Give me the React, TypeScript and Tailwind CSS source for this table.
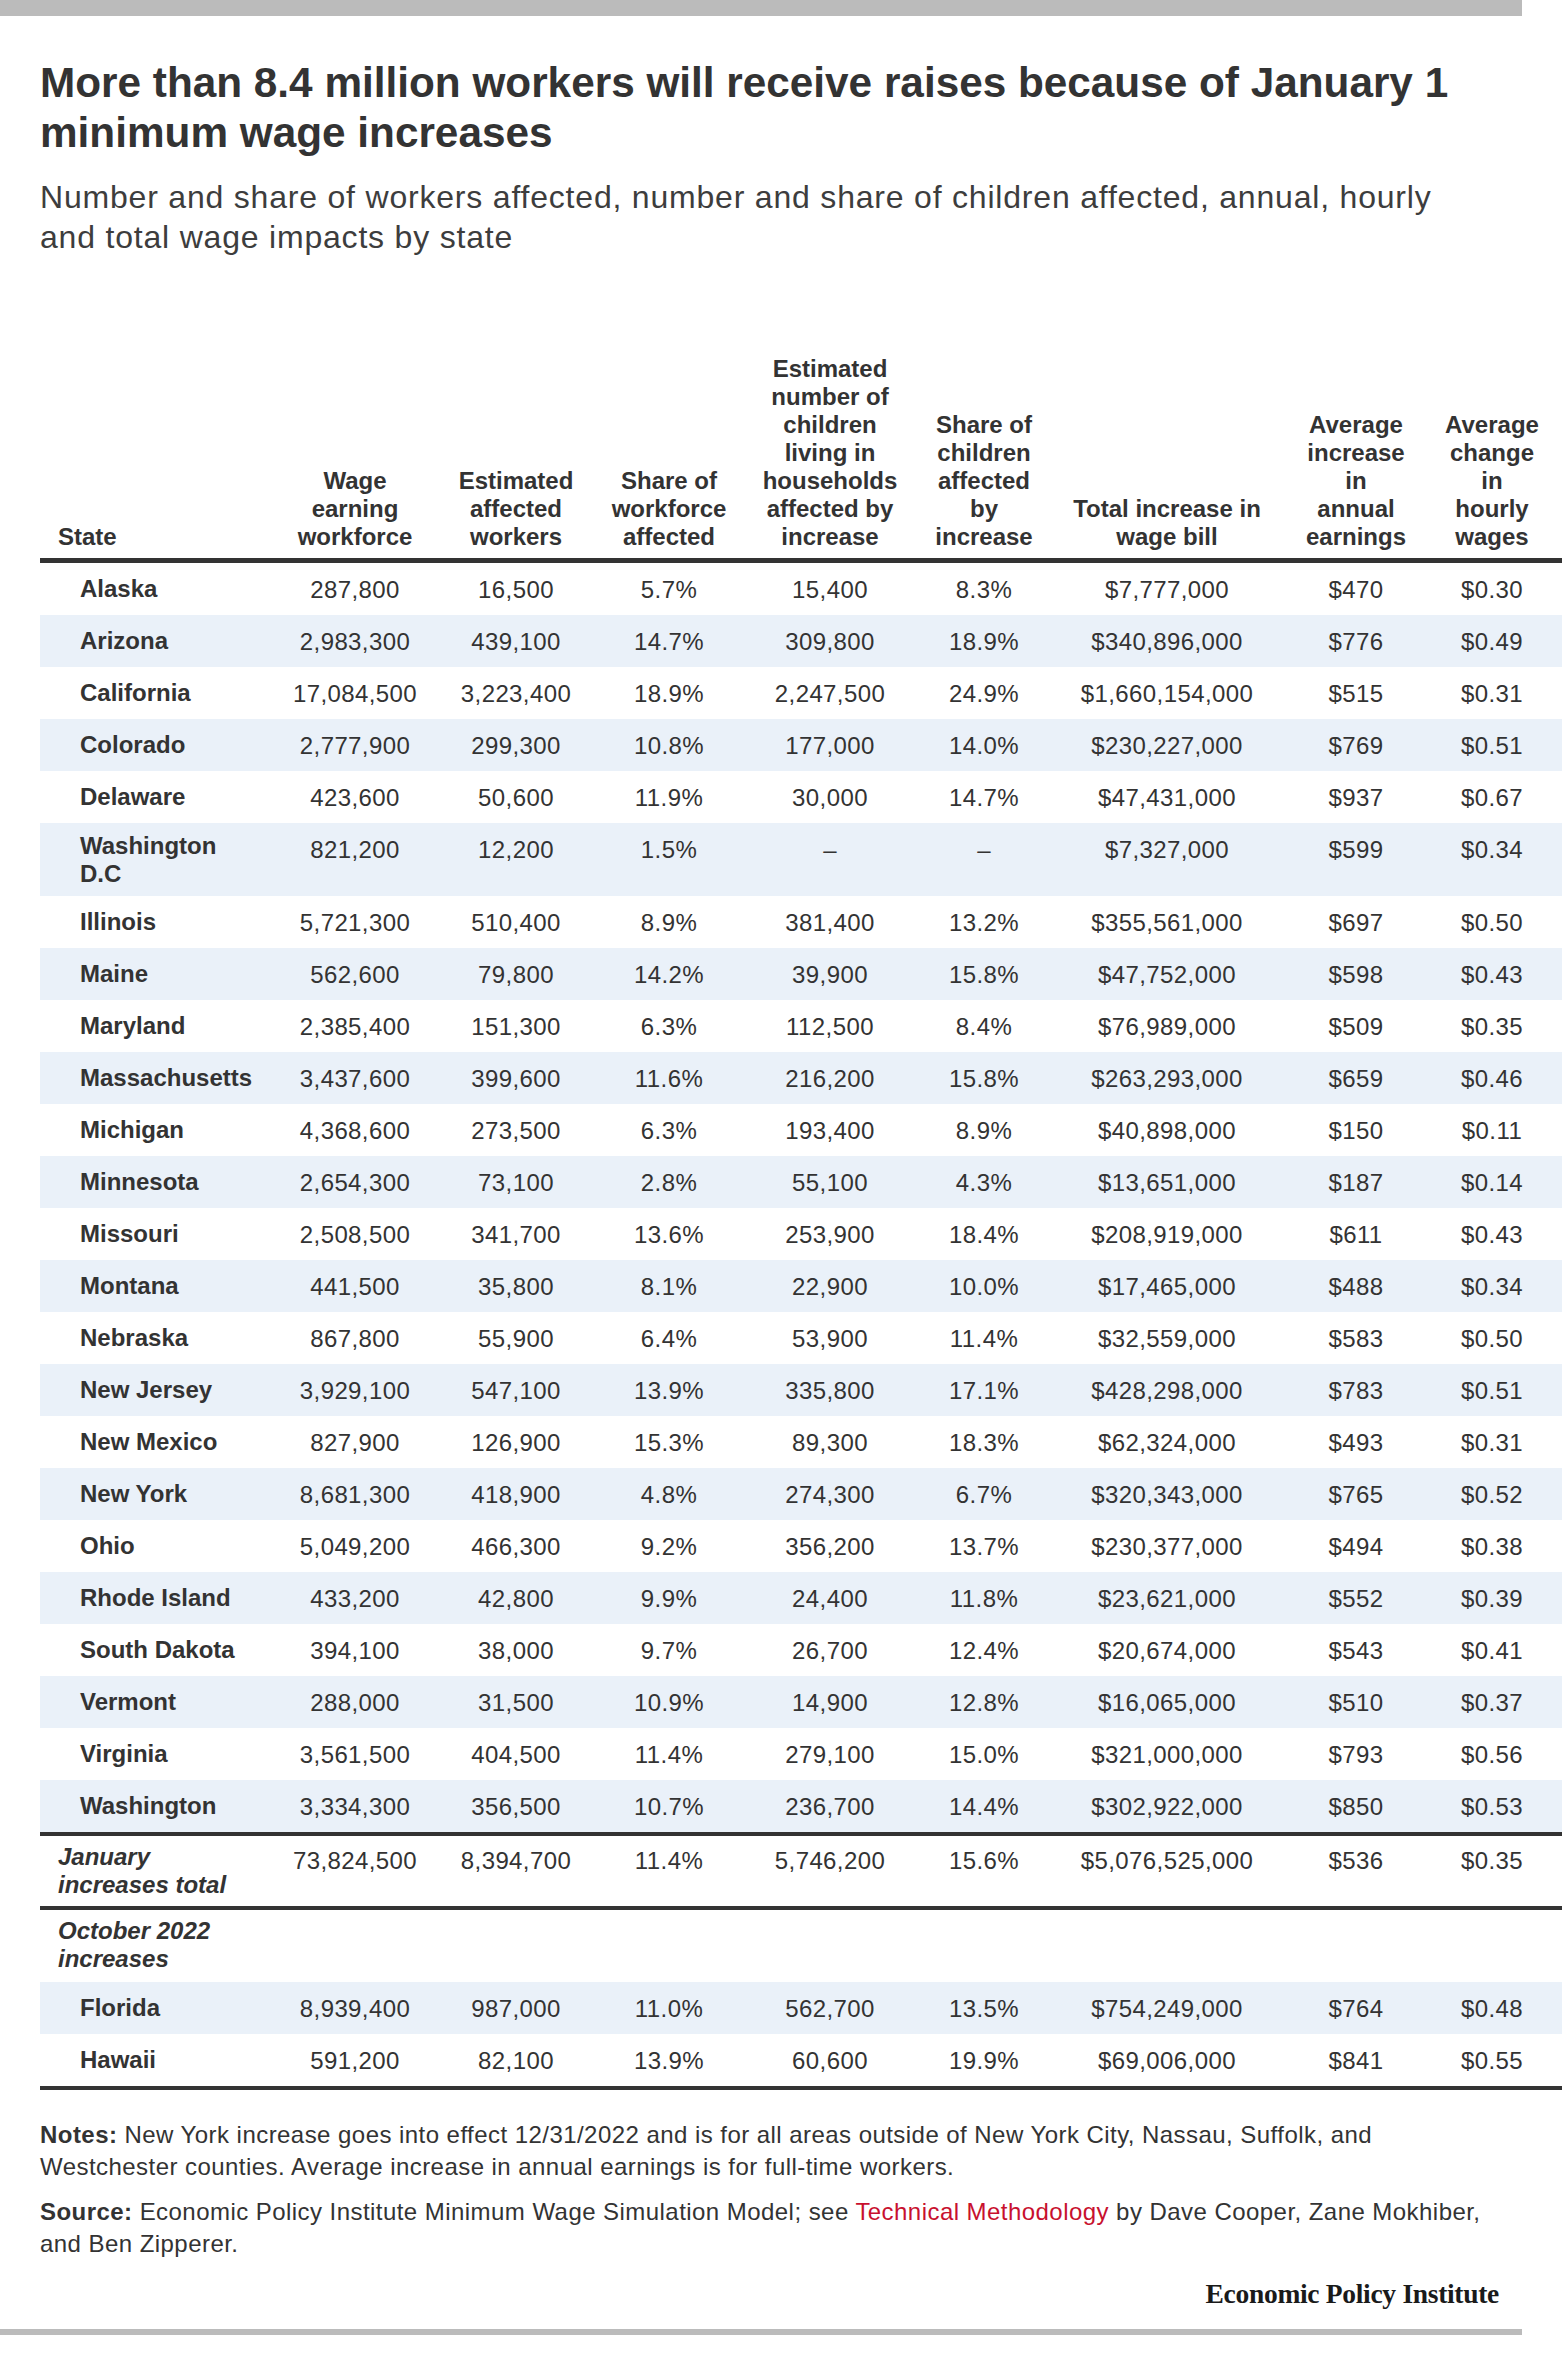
import React from "react";

type Row = string[];

const rows: Row[] = [
  ["Alaska", "287,800", "16,500", "5.7%", "15,400", "8.3%", "$7,777,000", "$470", "$0.30"],
  ["Arizona", "2,983,300", "439,100", "14.7%", "309,800", "18.9%", "$340,896,000", "$776", "$0.49"],
  ["California", "17,084,500", "3,223,400", "18.9%", "2,247,500", "24.9%", "$1,660,154,000", "$515", "$0.31"],
  ["Colorado", "2,777,900", "299,300", "10.8%", "177,000", "14.0%", "$230,227,000", "$769", "$0.51"],
  ["Delaware", "423,600", "50,600", "11.9%", "30,000", "14.7%", "$47,431,000", "$937", "$0.67"],
  ["Washington D.C", "821,200", "12,200", "1.5%", "–", "–", "$7,327,000", "$599", "$0.34"],
  ["Illinois", "5,721,300", "510,400", "8.9%", "381,400", "13.2%", "$355,561,000", "$697", "$0.50"],
  ["Maine", "562,600", "79,800", "14.2%", "39,900", "15.8%", "$47,752,000", "$598", "$0.43"],
  ["Maryland", "2,385,400", "151,300", "6.3%", "112,500", "8.4%", "$76,989,000", "$509", "$0.35"],
  ["Massachusetts", "3,437,600", "399,600", "11.6%", "216,200", "15.8%", "$263,293,000", "$659", "$0.46"],
  ["Michigan", "4,368,600", "273,500", "6.3%", "193,400", "8.9%", "$40,898,000", "$150", "$0.11"],
  ["Minnesota", "2,654,300", "73,100", "2.8%", "55,100", "4.3%", "$13,651,000", "$187", "$0.14"],
  ["Missouri", "2,508,500", "341,700", "13.6%", "253,900", "18.4%", "$208,919,000", "$611", "$0.43"],
  ["Montana", "441,500", "35,800", "8.1%", "22,900", "10.0%", "$17,465,000", "$488", "$0.34"],
  ["Nebraska", "867,800", "55,900", "6.4%", "53,900", "11.4%", "$32,559,000", "$583", "$0.50"],
  ["New Jersey", "3,929,100", "547,100", "13.9%", "335,800", "17.1%", "$428,298,000", "$783", "$0.51"],
  ["New Mexico", "827,900", "126,900", "15.3%", "89,300", "18.3%", "$62,324,000", "$493", "$0.31"],
  ["New York", "8,681,300", "418,900", "4.8%", "274,300", "6.7%", "$320,343,000", "$765", "$0.52"],
  ["Ohio", "5,049,200", "466,300", "9.2%", "356,200", "13.7%", "$230,377,000", "$494", "$0.38"],
  ["Rhode Island", "433,200", "42,800", "9.9%", "24,400", "11.8%", "$23,621,000", "$552", "$0.39"],
  ["South Dakota", "394,100", "38,000", "9.7%", "26,700", "12.4%", "$20,674,000", "$543", "$0.41"],
  ["Vermont", "288,000", "31,500", "10.9%", "14,900", "12.8%", "$16,065,000", "$510", "$0.37"],
  ["Virginia", "3,561,500", "404,500", "11.4%", "279,100", "15.0%", "$321,000,000", "$793", "$0.56"],
  ["Washington", "3,334,300", "356,500", "10.7%", "236,700", "14.4%", "$302,922,000", "$850", "$0.53"],
];

const totalRow = ["73,824,500", "8,394,700", "11.4%", "5,746,200", "15.6%", "$5,076,525,000", "$536", "$0.35"];

const octRows: Row[] = [
  ["Florida", "8,939,400", "987,000", "11.0%", "562,700", "13.5%", "$754,249,000", "$764", "$0.48"],
  ["Hawaii", "591,200", "82,100", "13.9%", "60,600", "19.9%", "$69,006,000", "$841", "$0.55"],
];

const headers: string[][] = [
  ["Wage", "earning", "workforce"],
  ["Estimated", "affected", "workers"],
  ["Share of", "workforce", "affected"],
  ["Estimated", "number of", "children", "living in", "households", "affected by", "increase"],
  ["Share of", "children", "affected", "by", "increase"],
  ["Total increase in", "wage bill"],
  ["Average", "increase", "in", "annual", "earnings"],
  ["Average", "change", "in", "hourly", "wages"],
];

const numCell = "align-top text-center whitespace-nowrap pt-[9px] pb-[8px] text-[24px] leading-[35px] tracking-[0.4px] text-[#333333]";

function StateRow({ row, striped, last }: { row: Row; striped: boolean; last?: boolean }) {
  const isDC = row[0] === "Washington D.C";
  const border = last ? " border-b-[4px] border-[#333333]" : "";
  return (
    <tr className={striped ? "bg-[#eaf1f9]" : "bg-white"}>
      <td
        className={
          "align-top text-left whitespace-nowrap pl-[40px] pb-[8px] text-[24px] leading-[28px] font-bold text-[#333333]" +
          (isDC ? " pt-[9px]" : " pt-[12px]") +
          border
        }
      >
        {isDC ? (
          <>
            Washington
            <br />
            D.C
          </>
        ) : (
          row[0]
        )}
      </td>
      {row.slice(1).map((v, i) => (
        <td key={i} className={numCell + (i === 7 ? " pr-[5px]" : "") + border}>
          {v}
        </td>
      ))}
    </tr>
  );
}

export default function App() {
  return (
    <div className="w-[1562px] bg-white text-[#333333] font-['Liberation_Sans',Arial,sans-serif]">
      <div className="w-[1522px] h-[16px] bg-[#bbbbbb]" />

      <h1 className="mt-[42px] pl-[40px] text-[42.3px] leading-[50px] font-bold text-[#333333]">
        More than 8.4 million workers will receive raises because of January 1
        <br />
        minimum wage increases
      </h1>

      <p className="mt-[19px] pl-[40px] text-[32px] leading-[40px] tracking-[0.8px] text-[#3d3d3d]">
        Number and share of workers affected, number and share of children affected, annual, hourly
        <br />
        and total wage impacts by state
      </p>

      <table className="mt-[93px] ml-[40px] w-[1522px] table-fixed border-separate border-spacing-0">
        <colgroup>
          <col className="w-[235px]" />
          <col className="w-[160px]" />
          <col className="w-[162px]" />
          <col className="w-[144px]" />
          <col className="w-[178px]" />
          <col className="w-[130px]" />
          <col className="w-[236px]" />
          <col className="w-[142px]" />
          <col className="w-[135px]" />
        </colgroup>
        <thead>
          <tr>
            <th className="align-bottom text-left pl-[18px] pt-[5px] pb-[7px] border-b-[5px] border-[#333333] text-[24px] leading-[28px] font-bold text-[#333333]">
              State
            </th>
            {headers.map((h, i) => (
              <th
                key={i}
                className={
                  "align-bottom text-center whitespace-nowrap pt-[5px] pb-[7px] border-b-[5px] border-[#333333] text-[24px] leading-[28px] font-bold text-[#333333]" +
                  (i === 7 ? " pr-[5px]" : "")
                }
              >
                {h.map((line, j) => (
                  <React.Fragment key={j}>
                    {j > 0 && <br />}
                    {line}
                  </React.Fragment>
                ))}
              </th>
            ))}
          </tr>
        </thead>
        <tbody>
          {rows.map((r, i) => (
            <StateRow key={r[0]} row={r} striped={i % 2 === 1} />
          ))}
          <tr className="bg-white">
            <td className="align-top text-left whitespace-nowrap pl-[18px] pt-[7px] pb-[7px] border-t-[4px] border-[#333333] text-[24px] leading-[28px] font-bold italic text-[#333333]">
              January
              <br />
              increases total
            </td>
            {totalRow.map((v, i) => (
              <td
                key={i}
                className={
                  "align-top text-center whitespace-nowrap pt-[7px] pb-[7px] border-t-[4px] border-[#333333] text-[24px] leading-[35px] tracking-[0.4px] text-[#333333]" +
                  (i === 7 ? " pr-[5px]" : "")
                }
              >
                {v}
              </td>
            ))}
          </tr>
          <tr className="bg-white">
            <td className="align-top text-left whitespace-nowrap pl-[18px] pt-[7px] pb-[9px] border-t-[4px] border-[#333333] text-[24px] leading-[28px] font-bold italic text-[#333333]">
              October 2022
              <br />
              increases
            </td>
            <td colSpan={8} className="border-t-[4px] border-[#333333]" />
          </tr>
          {octRows.map((r, i) => (
            <StateRow key={r[0]} row={r} striped={i === 0} last={i === octRows.length - 1} />
          ))}
        </tbody>
      </table>

      <div className="mt-[29px] pl-[40px] pr-[40px] text-[24px] leading-[32px] tracking-[0.45px] text-[#333333]">
        <p>
          <span className="font-bold">Notes:</span> New York increase goes into effect 12/31/2022 and is for all areas
          outside of New York City, Nassau, Suffolk, and
          <br />
          Westchester counties. Average increase in annual earnings is for full-time workers.
        </p>
        <p className="mt-[13px]">
          <span className="font-bold">Source:</span> Economic Policy Institute Minimum Wage Simulation Model; see{" "}
          <span className="text-[#c8102e]">Technical Methodology</span> by Dave Cooper, Zane Mokhiber,
          <br />
          and Ben Zipperer.
        </p>
      </div>

      <div className="mt-[18px] w-[1522px] pr-[23px] flex justify-end">
        <span className="font-['Liberation_Serif',serif] font-bold text-[27.5px] leading-[32px] tracking-[-0.3px] text-[#1a1a1a]">
          Economic Policy Institute
        </span>
      </div>

      <div className="mt-[19px] w-[1522px] h-[6px] bg-[#bbbbbb]" />
    </div>
  );
}
